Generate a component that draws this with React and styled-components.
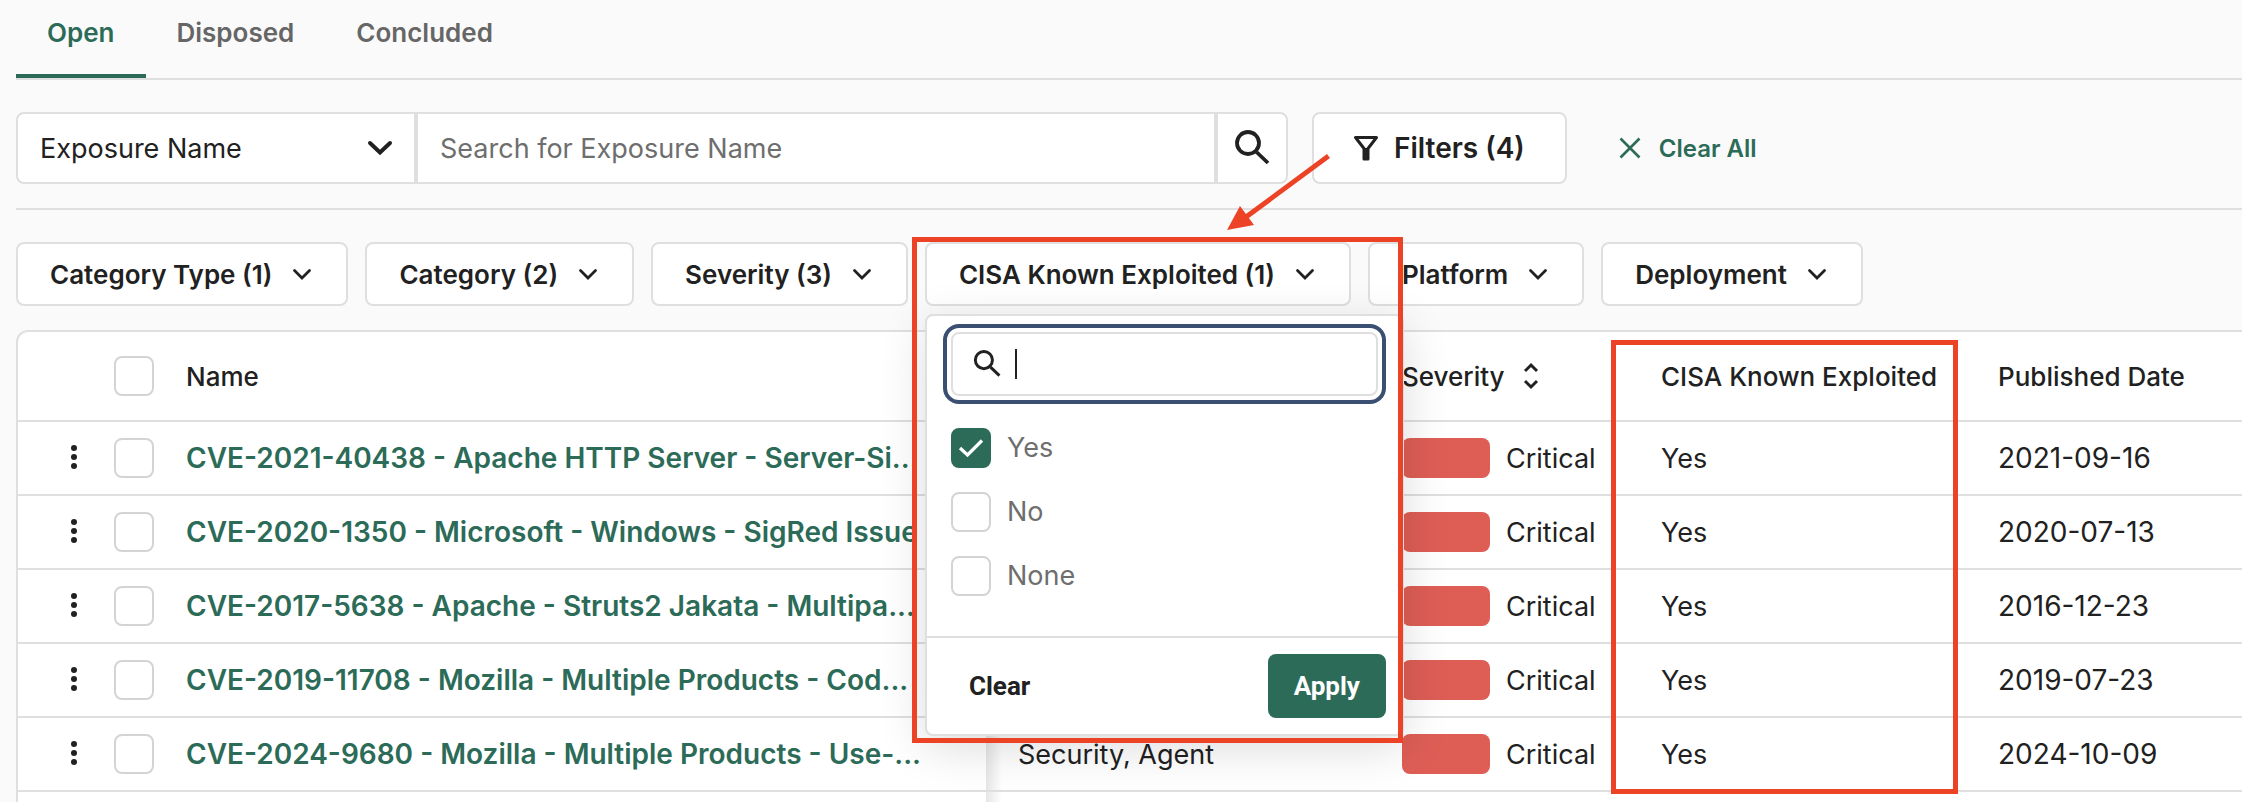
import React, { useState } from 'react';
import styled, { createGlobalStyle } from 'styled-components';

const GlobalStyle = createGlobalStyle`
    * {
        box-sizing: border-box;
    }

    :root {
        --green: #2c6b58;
        --text: #212121;
        --muted: #6e6e6e;
        --line: #dfdfdf;
        --box: #d4d4d4;
        --mark: #ec4327;
    }

    body {
        margin: 0;
        background: #fafafa;
        color: var(--text);
        font-family: Inter, 'Liberation Sans', sans-serif;
    }

    button, input, select {
        font-family: inherit;
        color: inherit;
    }
`;

const Page = styled.main`
    position: relative;
    min-height: 100vh;
    padding-left: 16px;
    display: flex;
    flex-direction: column;
`;

const Tabs = styled.nav`
    display: flex;
    height: 80px;
    border-bottom: 2px solid var(--line);
`;

const Tab = styled.button`
    height: 78px;
    padding: 0 31px 10px;
    border: none;
    border-bottom: 4px solid ${(p) => (p.$active ? 'var(--green)' : 'transparent')};
    background: none;
    font-size: 26px;
    font-weight: 600;
    color: ${(p) => (p.$active ? 'var(--green)' : '#666')};
`;

const SearchRow = styled.section`
    display: flex;
    align-items: center;
    padding: 32px 0 24px;
    border-bottom: 2px solid var(--line);
`;

const SearchGroup = styled.div`
    display: flex;
    width: 1272px;
    height: 72px;
`;

const SelectWrap = styled.div`
    position: relative;
    width: 400px;

    svg {
        position: absolute;
        right: 22px;
        top: 22px;
        pointer-events: none;
    }
`;

const FieldSelect = styled.select`
    appearance: none;
    width: 100%;
    height: 100%;
    padding: 0 22px;
    border: 2px solid var(--line);
    border-radius: 8px 0 0 8px;
    background: #fff;
    font-size: 27px;
`;

const SearchInput = styled.input`
    flex: 1;
    min-width: 0;
    padding: 0 22px;
    border: 2px solid var(--line);
    border-radius: 0;
    background: #fff;
    font-size: 27px;

    &::placeholder {
        color: var(--muted);
        opacity: 1;
    }
`;

const SearchButton = styled.button`
    display: flex;
    align-items: center;
    justify-content: center;
    width: 72px;
    padding: 0;
    border: 2px solid var(--line);
    border-radius: 0 8px 8px 0;
    background: #fff;
`;

const FiltersButton = styled.button`
    display: flex;
    align-items: center;
    gap: 14px;
    height: 72px;
    margin-left: 24px;
    padding: 0 40px 0 38px;
    border: 2px solid var(--line);
    border-radius: 8px;
    background: #fff;
    font-size: 28px;
    font-weight: 600;
`;

const ClearAll = styled.button`
    display: flex;
    align-items: center;
    gap: 17px;
    margin-left: 51px;
    padding: 0;
    border: none;
    background: none;
    color: var(--green);
    font-size: 24px;
    font-weight: 600;
`;

const FilterRow = styled.section`
    display: flex;
    gap: 17px;
    padding: 32px 0 24px;
`;

const FilterItem = styled.div`
    position: relative;
`;

const FilterButton = styled.button`
    display: flex;
    align-items: center;
    gap: 18px;
    height: 64px;
    padding: 0 32px;
    border: 2px solid var(--line);
    border-radius: 8px;
    background: #fff;
    font-size: 26px;
    font-weight: 600;
    white-space: nowrap;
`;

const Popover = styled.div`
    position: absolute;
    z-index: 2;
    top: 72px;
    left: 0;
    width: 479px;
    border: 2px solid var(--line);
    border-radius: 8px;
    background: #fff;
    box-shadow: 0 12px 48px rgba(0, 0, 0, 0.14);
`;

const PopoverBody = styled.div`
    display: flex;
    flex-direction: column;
    gap: 24px;
    padding: 16px 24px 40px;
`;

const PopoverSearch = styled.label`
    display: flex;
    align-items: center;
    gap: 14px;
    height: 64px;
    margin-bottom: 8px;
    padding: 0 20px;
    border: 2px solid var(--line);
    border-radius: 8px;
    outline: 4px solid #3b4f72;
    outline-offset: 4px;

    svg {
        flex: none;
    }

    input {
        flex: 1;
        min-width: 0;
        height: 30px;
        padding: 0;
        border: none;
        border-left: 2px solid var(--text);
        outline: none;
        background: none;
        font-size: 26px;
        caret-color: transparent;
    }
`;

const Option = styled.label`
    display: flex;
    align-items: center;
    gap: 16px;
    height: 40px;
    color: var(--muted);
    font-size: 27px;
    line-height: 38px;
`;

const Checkbox = styled.input`
    appearance: none;
    display: block;
    flex: none;
    width: 40px;
    height: 40px;
    margin: 0;
    border: 2px solid var(--box);
    border-radius: 8px;
    background: #fff;

    &:checked {
        border-color: var(--green);
        background: var(--green);
    }
`;

const CheckWrap = styled.span`
    position: relative;
    display: flex;

    svg {
        position: absolute;
        inset: 0;
        pointer-events: none;
    }
`;

const PopoverFooter = styled.div`
    display: flex;
    justify-content: space-between;
    padding: 16px;
    border-top: 2px solid var(--line);
`;

const ActionButton = styled.button`
    height: 64px;
    padding: 0 26px;
    border: none;
    border-radius: 8px;
    background: ${(p) => (p.$primary ? 'var(--green)' : 'none')};
    color: ${(p) => (p.$primary ? '#fff' : 'var(--text)')};
    font-family: Roboto, 'Liberation Sans', sans-serif;
    font-size: 26px;
    font-weight: 700;
`;

const TableCard = styled.section`
    flex: 1;
    border: 2px solid var(--line);
    border-width: 2px 0 0 2px;
    border-radius: 12px 0 0 0;
    background: #fff;
    overflow: hidden;
`;

const Table = styled.table`
    width: 100%;
    table-layout: fixed;
    border-collapse: separate;
    border-spacing: 0;
    text-align: left;
    white-space: nowrap;
`;

const Th = styled.th`
    height: 90px;
    padding: 0;
    border-bottom: 2px solid var(--line);
    font-size: 26px;
    font-weight: 500;
`;

const Td = styled.td`
    height: 74px;
    padding: 0;
    border-bottom: 2px solid var(--line);
    font-size: ${(p) => (p.$numeric ? 28 : 27)}px;
`;

const AfterPinned = styled(Td)`
    padding-left: 32px;
    background: linear-gradient(to right, #e6e6e6, rgba(255, 255, 255, 0) 16px);
`;

const TailPinned = styled(AfterPinned)`
    height: 10px;
    border-bottom: none;
`;

const MenuButton = styled.button`
    display: block;
    margin-left: auto;
    margin-right: 36px;
    padding: 0;
    border: none;
    background: none;
`;

const NameLink = styled.a`
    color: var(--green);
    font-size: 28px;
    font-weight: 600;
    text-decoration: none;
`;

const Severity = styled.div`
    display: flex;
    align-items: center;
    gap: 16px;
`;

const SeverityBar = styled.span`
    width: 88px;
    height: 40px;
    border-radius: 8px;
    background: #de5e56;
`;

const SortButton = styled.button`
    display: flex;
    align-items: center;
    gap: 18px;
    padding: 0;
    border: none;
    background: none;
    font-size: 26px;
    font-weight: 500;
`;

const Highlight = styled.div`
    position: absolute;
    z-index: 3;
    left: ${(p) => p.$x}px;
    top: ${(p) => p.$y}px;
    width: ${(p) => p.$w}px;
    height: ${(p) => p.$h}px;
    border: 5px solid var(--mark);
    pointer-events: none;
`;

const Arrow = styled.svg`
    position: absolute;
    z-index: 3;
    left: 1220px;
    top: 150px;
    pointer-events: none;
`;

const SearchIcon = ({ size = 36 }) => (
    <svg width={size} height={size} viewBox="0 0 36 36" fill="none" stroke="#212121" strokeWidth="3.8">
        <circle cx="14" cy="13" r="11" />
        <path d="M22.500 22 34 33" />
    </svg>
);

const Chevron = () => (
    <svg width="24" height="24" viewBox="0 0 24 24" fill="none" stroke="#212121" strokeWidth="2.8">
        <path d="M4.500 8.500 12 16 19.500 8.500" strokeLinecap="round" />
    </svg>
);

const filters = ['Category Type (1)', 'Category (2)', 'Severity (3)', 'CISA Known Exploited (1)', 'Platform', 'Deployment'];

const rows = [
    { name: 'CVE-2021-40438 - Apache HTTP Server - Server-Si...', date: '2021-09-16' },
    { name: 'CVE-2020-1350 - Microsoft - Windows - SigRed Issue', date: '2020-07-13' },
    { name: 'CVE-2017-5638 - Apache - Struts2 Jakata - Multipa...', date: '2016-12-23' },
    { name: 'CVE-2019-11708 - Mozilla - Multiple Products - Cod...', date: '2019-07-23' },
    { name: 'CVE-2024-9680 - Mozilla - Multiple Products - Use-...', date: '2024-10-09', category: 'Security, Agent' }
];

const KnownExploitedPopover = () => {
    const [checked, setChecked] = useState({ Yes: true, No: false, None: false });

    const toggle = (e) => {
        setChecked({ ...checked, [e.target.name]: e.target.checked });
    };

    return (
        <Popover>
            <PopoverBody>
                <PopoverSearch>
                    <SearchIcon size={28} />
                    <input type="text" aria-label="Search options" />
                </PopoverSearch>
                {Object.keys(checked).map((key) => (
                    <Option key={key}>
                        <CheckWrap>
                            <Checkbox type="checkbox" name={key} checked={checked[key]} onChange={toggle} />
                            {checked[key] && (
                                <svg width="40" height="40" viewBox="0 0 40 40" fill="none" stroke="#fff" strokeWidth="3.2">
                                    <path d="M9 20 16.500 27 31 12.500" />
                                </svg>
                            )}
                        </CheckWrap>
                        {key}
                    </Option>
                ))}
            </PopoverBody>
            <PopoverFooter>
                <ActionButton>Clear</ActionButton>
                <ActionButton $primary>Apply</ActionButton>
            </PopoverFooter>
        </Popover>
    );
};

const App = () => {
    const [tab, setTab] = useState('Open');

    return (
        <Page>
            <GlobalStyle />
            <Tabs>
                {['Open', 'Disposed', 'Concluded'].map((name) => (
                    <Tab key={name} $active={tab === name} onClick={() => setTab(name)}>{name}</Tab>
                ))}
            </Tabs>

            <SearchRow>
                <SearchGroup>
                    <SelectWrap>
                        <FieldSelect aria-label="Search field">
                            <option>Exposure Name</option>
                        </FieldSelect>
                        <svg width="28" height="28" viewBox="0 0 28 28" fill="none" stroke="#212121" strokeWidth="4">
                            <path d="M4 9 14 18.500 24 9" strokeLinecap="round" />
                        </svg>
                    </SelectWrap>
                    <SearchInput type="text" aria-label="Search" placeholder="Search for Exposure Name" />
                    <SearchButton aria-label="Search"><SearchIcon /></SearchButton>
                </SearchGroup>
                <FiltersButton>
                    <svg width="28" height="28" viewBox="0 0 28 28" fill="none" stroke="#212121" strokeWidth="3">
                        <path d="M3.500 3.500H24.500L16 14.500V25H12V14.500Z" strokeLinejoin="round" />
                        <path d="M14 14V25" />
                    </svg>
                    Filters (4)
                </FiltersButton>
                <ClearAll>
                    <svg width="24" height="24" viewBox="0 0 24 24" fill="none" stroke="#2c6b58" strokeWidth="2.6">
                        <path d="M2.500 2.500 21.500 21.500M21.500 2.500 2.500 21.500" />
                    </svg>
                    Clear All
                </ClearAll>
            </SearchRow>

            <FilterRow>
                {filters.map((name) => (
                    <FilterItem key={name}>
                        <FilterButton>
                            {name}
                            <Chevron />
                        </FilterButton>
                        {name.startsWith('CISA') && <KnownExploitedPopover />}
                    </FilterItem>
                ))}
            </FilterRow>

            <TableCard>
                <Table>
                    <colgroup>
                        <col style={{ width: 96 }} />
                        <col style={{ width: 72 }} />
                        <col style={{ width: 800 }} />
                        <col style={{ width: 416 }} />
                        <col style={{ width: 259 }} />
                        <col style={{ width: 337 }} />
                        <col />
                    </colgroup>
                    <thead>
                        <tr>
                            <Th />
                            <Th><Checkbox type="checkbox" aria-label="Select all" /></Th>
                            <Th>Name</Th>
                            <Th />
                            <Th>
                                <SortButton>
                                    Severity
                                    <svg width="16" height="28" viewBox="0 0 16 28" fill="none" stroke="#212121" strokeWidth="3">
                                        <path d="M2 9 8 3 14 9M2 19 8 25 14 19" />
                                    </svg>
                                </SortButton>
                            </Th>
                            <Th>CISA Known Exploited</Th>
                            <Th>Published Date</Th>
                        </tr>
                    </thead>
                    <tbody>
                        {rows.map((row) => (
                            <tr key={row.name}>
                                <Td>
                                    <MenuButton aria-label="Row actions">
                                        <svg width="8" height="28" viewBox="0 0 8 28" fill="#212121">
                                            <circle cx="4" cy="5" r="3" />
                                            <circle cx="4" cy="14" r="3" />
                                            <circle cx="4" cy="23" r="3" />
                                        </svg>
                                    </MenuButton>
                                </Td>
                                <Td><Checkbox type="checkbox" aria-label={row.name} /></Td>
                                <Td><NameLink href="#">{row.name}</NameLink></Td>
                                <AfterPinned>{row.category}</AfterPinned>
                                <Td><Severity><SeverityBar />Critical</Severity></Td>
                                <Td>Yes</Td>
                                <Td $numeric>{row.date}</Td>
                            </tr>
                        ))}
                        <tr>
                            <td colSpan={3} />
                            <TailPinned />
                            <td colSpan={3} />
                        </tr>
                    </tbody>
                </Table>
            </TableCard>

            <Highlight $x={912} $y={237} $w={491} $h={506} />
            <Highlight $x={1611} $y={340} $w={347} $h={454} />
            <Arrow width="120" height="90" viewBox="0 0 120 90">
                <path d="M108.500 6 26 67" stroke="#ec4327" strokeWidth="5" />
                <path d="M7 80 20 56 34 75Z" fill="#ec4327" />
            </Arrow>
        </Page>
    );
};

export default App;
